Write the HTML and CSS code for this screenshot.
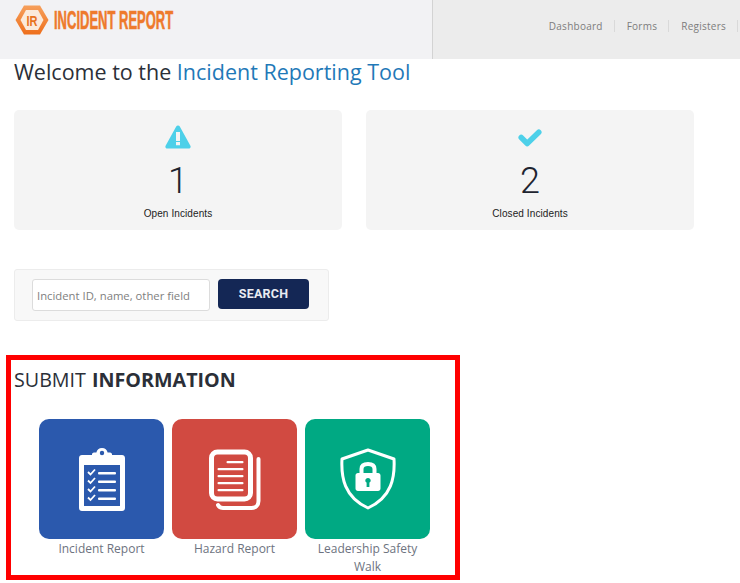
FILE: index.html
```html
<!DOCTYPE html>
<html lang="en">
<head>
<meta charset="utf-8">
<title>Incident Report</title>
<link rel="stylesheet" href="styles.css">
</head>
<body>
<header class="topbar">
  <div class="brand">
    <svg class="brand-mark" viewBox="0 0 34 30" width="34" height="30" aria-hidden="true">
      <defs><linearGradient id="og" x1="0" y1="0" x2="0" y2="1"><stop offset="0" stop-color="#f6a05c"/><stop offset="1" stop-color="#ee6f1c"/></linearGradient></defs>
      <polygon points="9,0.5 25,0.5 33.5,15 25,29.5 9,29.5 0.5,15" fill="url(#og)"/>
      <polygon points="11,5 23,5 28.500,15 23,25 11,25 5.500,15" fill="#fbeadb"/>
      <text x="17" y="21" text-anchor="middle" textLength="11" lengthAdjust="spacingAndGlyphs" class="brand-mark-text">IR</text>
    </svg>
    <span class="brand-name">INCIDENT REPORT</span>
  </div>
  <nav class="nav">
    <a class="nav-link">Dashboard</a>
    <a class="nav-link">Forms</a>
    <a class="nav-link">Registers</a>
  </nav>
</header>

<main class="page">
  <h1 class="welcome">Welcome to the <span class="welcome-accent">Incident Reporting Tool</span></h1>

  <section class="stats">
    <div class="stat">
      <svg class="stat-icon" viewBox="0 0 26 24" width="26" height="24" aria-hidden="true">
        <path fill="#4dd0e9" fill-rule="evenodd" d="M13 0.5c.8 0 1.4.4 1.8 1.1l10.6 19.2c.7 1.3-.2 2.7-1.700 2.700H2.300c-1.500 0-2.400-1.400-1.700-2.700L11.200 1.600C11.600.9 12.200.5 13 .5zM11 7v9h4V7zM11 17v3.300h4V17z"/>
      </svg>
      <div class="stat-value">1</div>
      <div class="stat-label">Open Incidents</div>
    </div>
    <div class="stat">
      <svg class="stat-icon" viewBox="0 -1 24 18" width="24" height="18" aria-hidden="true">
        <path fill="none" stroke="#4dd0e9" stroke-width="5.500" stroke-linecap="round" stroke-linejoin="round" d="M3.200 8.500l6 6L20.800 3.200"/>
      </svg>
      <div class="stat-value">2</div>
      <div class="stat-label">Closed Incidents</div>
    </div>
  </section>

  <form class="search">
    <input class="search-input" type="text" placeholder="Incident ID, name, other field">
    <button class="search-button" type="button">SEARCH</button>
  </form>

  <section class="submit">
    <h2 class="submit-title">SUBMIT <strong>INFORMATION</strong></h2>
    <div class="tiles">
      <a class="tile">
        <span class="tile-box tile-blue">
          <svg viewBox="0 0 46 63" width="46" height="63" aria-hidden="true">
            <path fill="#fff" d="M23 0c-3 0-5.200 2-5.600 4.600H15c-1.100 0-2 .9-2 2V7H3C1.300 7 0 8.300 0 10v50c0 1.700 1.300 3 3 3h40c1.700 0 3-1.300 3-3V10c0-1.700-1.300-3-3-3H33v-.4c0-1.100-.9-2-2-2h-2.400C28.200 2 26 0 23 0z"/>
            <circle cx="23" cy="5" r="2.200" fill="#2b59ad"/>
            <rect x="5" y="17" width="36" height="41" fill="#2b59ad"/>
            <path fill="none" stroke="#fff" stroke-width="1.800" d="M9 24l2.500 2.500 4.500-5M9 32.500l2.500 2.500 4.500-5M9 41l2.500 2.500 4.500-5M9 49.500l2.500 2.500 4.500-5"/>
            <g fill="#fff">
              <rect x="19" y="24" width="18" height="2.500" rx="1"/>
              <rect x="19" y="32.500" width="18" height="2.500" rx="1"/>
              <rect x="19" y="41" width="18" height="2.500" rx="1"/>
              <rect x="19" y="49.500" width="18" height="2.500" rx="1"/>
            </g>
          </svg>
        </span>
        <span class="tile-label">Incident Report</span>
      </a>
      <a class="tile">
        <span class="tile-box tile-red">
          <svg viewBox="0 0 52 61" width="52" height="61" aria-hidden="true">
            <path fill="none" stroke="#fff" stroke-width="4" stroke-linecap="round" d="M49.500 10v42c0 4-3 7-7 7H14c-2 0-4-1-5-3"/>
            <rect x="2.500" y="3" width="39" height="47" rx="6" fill="#d14a41" stroke="#fff" stroke-width="5"/>
            <g fill="#fff">
              <rect x="17.500" y="12" width="17" height="2.200" rx="1"/>
              <rect x="8.500" y="19" width="26" height="2.200" rx="1"/>
              <rect x="8.500" y="26" width="26" height="2.200" rx="1"/>
              <rect x="8.500" y="33" width="26" height="2.200" rx="1"/>
              <rect x="8.500" y="40" width="26" height="2.200" rx="1"/>
            </g>
          </svg>
        </span>
        <span class="tile-label">Hazard Report</span>
      </a>
      <a class="tile">
        <span class="tile-box tile-green">
          <svg viewBox="0 0 56 62" width="56" height="62" aria-hidden="true">
            <path fill="none" stroke="#fff" stroke-width="3" stroke-linejoin="round" d="M28 2L54 11c1 18-2 38-26 49C4 49 1 29 2 11z"/>
            <path fill="none" stroke="#fff" stroke-width="4" d="M21.500 27v-6c0-3.500 2.500-5 6.500-5s6.500 1.500 6.500 5v6"/>
            <path fill="#fff" fill-rule="evenodd" d="M18 25h20c1.500 0 2.500 1 2.500 2.500v13c0 1.500-1 2.500-2.500 2.500H18c-1.500 0-2.500-1-2.500-2.500v-13c0-1.500 1-2.500 2.500-2.500zM28 30c-1.500 0-2.700 1.100-2.700 2.500 0 .9.500 1.600 1.300 2.100V39h2.800v-4.400c.8-.5 1.300-1.200 1.300-2.100C30.700 31.100 29.500 30 28 30z"/>
          </svg>
        </span>
        <span class="tile-label">Leadership Safety Walk</span>
      </a>
    </div>
  </section>
</main>
</body>
</html>
```
FILE: styles.css
```css
* { box-sizing: border-box; }
html, body { margin: 0; padding: 0; height: 583px; overflow: hidden; background: #fff; }
body { font-family: "Open Sans", sans-serif; color: #2b2f38; }

.topbar { display: flex; height: 59px; background: #ececec; }
.brand {
  width: 433px;
  flex: none;
  background: #f2f2f4;
  border-right: 1px solid #d3d3d3;
  padding: 5px 0 0 15px;
  display: flex;
  align-items: flex-start;
  gap: 5px;
  overflow: hidden;
}
.brand-mark { flex: none; }
.brand-mark-text { font: bold 15px "Liberation Sans", sans-serif; fill: #e8731f; }
.brand-name {
  font: bold 25px/30px "Liberation Sans", sans-serif;
  white-space: nowrap;
  color: #ee7a2c;
  -webkit-text-stroke: 0.6px #ef7d30;
  transform: scaleX(0.52);
  transform-origin: left center;
  flex: none;
}
.nav { flex: 1; display: flex; justify-content: flex-end; align-items: flex-start; padding: 20px 2px 0 0; }
.nav-link {
  font-size: 10px;
  line-height: 12px;
  letter-spacing: 0.25px;
  color: #7c7c7c;
  padding: 0 11px 0 12px;
  border-right: 1px solid #d9d9d9;
}

.page { padding: 0 14px; }
.welcome { margin: -1px 0 0; font-size: 21.5px; font-weight: 400; line-height: 28px; color: #2b2f38; }
.welcome-accent { color: #1f79b8; }

.stats { display: flex; gap: 24px; margin-top: 24px; }
.stat {
  width: 328px;
  height: 120px;
  background: #f4f4f4;
  border-radius: 5px;
  display: flex;
  flex-direction: column;
  align-items: center;
  padding-top: 14px;
}
.stat-icon { height: 26px; flex: none; }
.stat-value { font: 300 36px/40px "Roboto", sans-serif; color: #1e2430; margin-top: 11px; }
.stat-label { font: 400 10px/12px "Liberation Sans", sans-serif; letter-spacing: 0.1px; color: #222; margin-top: 7px; }

.search {
  width: 315px;
  height: 52px;
  margin-top: 39px;
  background: #f8f8f8;
  border: 1px solid #ececec;
  border-radius: 3px;
  display: flex;
  align-items: flex-start;
  gap: 8px;
  padding: 9px 0 0 17px;
}
.search-input {
  width: 178px;
  height: 32px;
  border: 1px solid #dcdcdc;
  border-radius: 3px;
  background: #fff;
  padding: 0 4px;
  font: 400 11.300px "Open Sans", sans-serif;
  color: #777;
}
.search-input::placeholder { color: #808080; opacity: 1; }
.search-button {
  width: 91px;
  height: 30px;
  border: 0;
  border-radius: 4px;
  background: #142755;
  color: #e8ebf2;
  font: 700 12.500px "Roboto", sans-serif;
  letter-spacing: 0.2px;
  padding: 0 0 1px;
}

.submit {
  width: 454px;
  height: 225px;
  margin: 34px 0 0 -8px;
  border: 5px solid #ff0000;
  padding: 6px 0 0 3px;
}
.submit-title { margin: 0; font-size: 19.700px; font-weight: 400; line-height: 27px; word-spacing: 1px; color: #2b2f38; }
.submit-title strong { font-weight: 700; }
.tiles { display: flex; gap: 8px; margin-top: 26px; padding-left: 25px; }
.tile { width: 125px; display: flex; flex-direction: column; align-items: center; text-align: center; }
.tile-box {
  width: 125px;
  height: 120px;
  border-radius: 10px;
  display: flex;
  align-items: center;
  justify-content: center;
}
.tile-blue { background: #2b59ad; }
.tile-red { background: #d14a41; }
.tile-green { background: #00a983; }
.tile-label { font-size: 12px; line-height: 18px; color: #6d7380; margin-top: 1px; width: 110px; }
```
